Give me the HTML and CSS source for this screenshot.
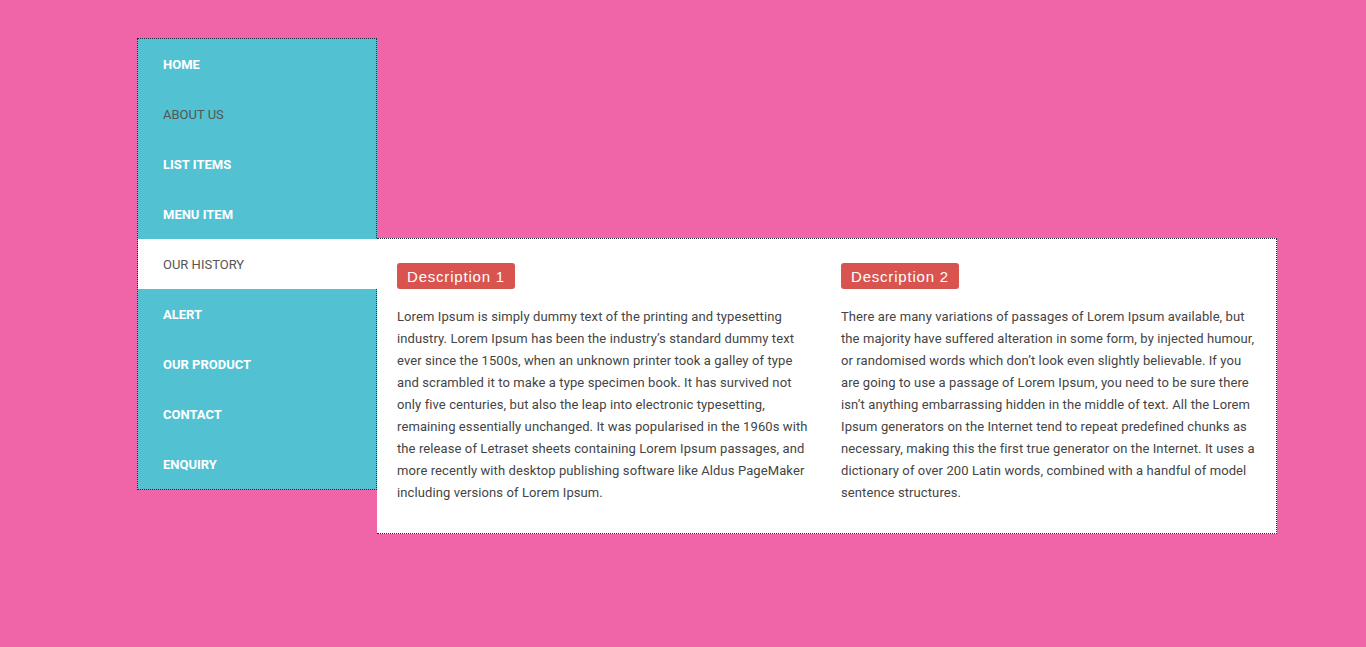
FILE: index.html
```html
<!DOCTYPE html>
<html>
<head>
<meta charset="utf-8">
<link rel="stylesheet" href="styles.css">
</head>
<body>
<div class="wrap">
  <ul class="menu">
    <li class="item">Home</li>
    <li class="item muted">About Us</li>
    <li class="item">List Items</li>
    <li class="item">Menu Item</li>
    <li class="item active">Our History</li>
    <li class="item">Alert</li>
    <li class="item">Our Product</li>
    <li class="item">Contact</li>
    <li class="item">Enquiry</li>
  </ul>
  <div class="panel">
    <div class="col">
      <span class="label">Description 1</span>
      <p class="text">Lorem Ipsum is simply dummy text of the printing and typesetting industry. Lorem Ipsum has been the industry’s standard dummy text ever since the 1500s, when an unknown printer took a galley of type and scrambled it to make a type specimen book. It has survived not only five centuries, but also the leap into electronic typesetting, remaining essentially unchanged. It was popularised in the 1960s with the release of Letraset sheets containing Lorem Ipsum passages, and more recently with desktop publishing software like Aldus PageMaker including versions of Lorem Ipsum.</p>
    </div>
    <div class="col">
      <span class="label">Description 2</span>
      <p class="text">There are many variations of passages of Lorem Ipsum available, but the majority have suffered alteration in some form, by injected humour, or randomised words which don’t look even slightly believable. If you are going to use a passage of Lorem Ipsum, you need to be sure there isn’t anything embarrassing hidden in the middle of text. All the Lorem Ipsum generators on the Internet tend to repeat predefined chunks as necessary, making this the first true generator on the Internet. It uses a dictionary of over 200 Latin words, combined with a handful of model sentence structures.</p>
    </div>
  </div>
</div>
</body>
</html>
```
FILE: styles.css
```css
html, body {
  margin: 0;
  padding: 0;
  background: #f065a8;
  font-family: Roboto, "Liberation Sans", sans-serif;
}
.wrap {
  display: flex;
  align-items: flex-start;
  padding: 38px 0 0 137px;
}
.menu {
  list-style: none;
  margin: 0;
  padding: 0;
  width: 238px;
  background: #52c1d2;
  border: 1px dotted #1a2a3a;
  flex: none;
}
.item {
  height: 50px;
  line-height: 52px;
  overflow: hidden;
  padding-left: 25px;
  font-size: 13px;
  font-weight: 700;
  color: #fff;
  text-transform: uppercase;
}
.item.muted {
  color: #555;
  font-weight: 400;
}
.item.active {
  background: #fff;
  color: #555;
  font-weight: 400;
  margin-right: -1px;
}
.panel {
  margin-top: 200px;
  width: 889px;
  background: #fff;
  border: 1px dotted #1a2a3a;
  border-left: none;
  padding: 24px 5px 29px;
  display: flex;
}
.col {
  width: 414px;
  padding: 0 15px;
}
.label {
  display: inline-block;
  background: #d9534f;
  color: #fff;
  font-family: "Liberation Sans", Arial, sans-serif;
  font-size: 15px;
  letter-spacing: 0.8px;
  height: 26px;
  line-height: 28px;
  padding: 0 10px;
  border-radius: 3px;
}
.text {
  margin: 17px 0 0;
  font-size: 13px;
  line-height: 22px;
  letter-spacing: 0.1px;
  color: #444;
}
```
